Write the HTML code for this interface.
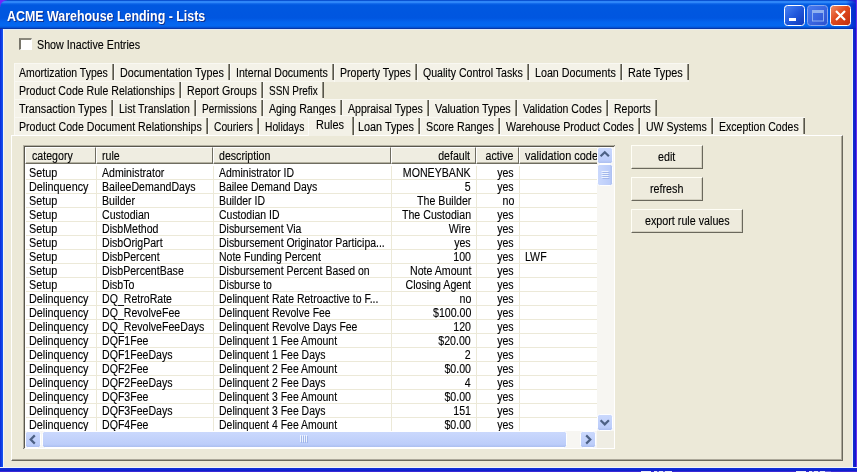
<!DOCTYPE html>
<html><head><meta charset="utf-8"><title>ACME Warehouse Lending - Lists</title>
<style>
html,body{margin:0;padding:0;}
body{width:857px;height:472px;overflow:hidden;position:relative;background:#ece9d8;font-family:"Liberation Sans",sans-serif;font-size:12px;color:#000;}
.abs{position:absolute;}
.t{display:inline-block;transform:scaleX(0.894);transform-origin:0 0;white-space:nowrap;filter:grayscale(1);-webkit-text-stroke:0.12px #000;}
.r .t{transform-origin:100% 0;}
.m .t{transform-origin:50% 0;}
#title{left:0;top:0;width:857px;height:29px;background:linear-gradient(to bottom,#0a52d2 0px,#0a52d2 0.8px,#2e86f8 1.3px,#2e86f8 2.6px,#1068ea 3.6px,#0058e0 5px,#0056e0 18px,#0464ee 22px,#0468f0 26px,#0452d4 27.5px,#0838a8 28px,#0838a8 29px);}
#topl{left:3px;top:29px;width:850px;height:1px;background:#e2eaf4;}
#title span{position:absolute;left:7px;top:8px;line-height:17px;color:#fff;font-weight:bold;font-size:14px;white-space:nowrap;text-shadow:1px 1px 0 #10308c;transform:scaleX(.887);transform-origin:0 0;}
#bl{left:0;top:29px;width:4px;height:443px;background:linear-gradient(to right,#0a28d8 0,#1048ea 2px,#1a58f0 3px,#f2f5f8 3px,#f2f5f8 4px);}
#br{left:852px;top:29px;width:5px;height:443px;background:linear-gradient(to right,#eef3f8 0,#eef3f8 1px,#1030d0 1px,#1414c8 4px,#6a30f0 4px);}
#bb{left:0;top:467px;width:857px;height:5px;background:linear-gradient(to bottom,#eef3f8 0,#eef3f8 1px,#1030dc 1px,#0c18c0 5px);}
.tab{position:absolute;height:19px;line-height:19px;border-top:1px solid #f9f8f2;white-space:nowrap;background:#f4f2e8;box-sizing:border-box;padding-left:4px;border-left:1px solid #faf9f4;}
.tab:after{content:"";position:absolute;right:0;top:0px;width:1px;height:16px;background:#57554b;border-left:1px solid #939183;}
.tab.sel{z-index:2;background:#f3f1e7;height:21px;padding-left:7px;border-left:1px solid #fcfbf8;}
.tab.sel:after{top:1px;height:18px;}
#panel{z-index:1;left:11px;top:135px;width:832px;height:326px;box-sizing:border-box;border-left:1px solid #fff;border-top:1px solid #fff;border-right:1px solid #6a685c;border-bottom:1px solid #6a685c;box-shadow:inset -1px -1px 0 #aca899;}
#lv{z-index:3;left:23px;top:145px;width:592px;height:304px;background:#fff;box-sizing:border-box;border-left:2px solid #5a584e;border-top:2px solid #5a584e;border-right:1px solid #fff;border-bottom:1px solid #fff;overflow:hidden;}
#lvo{z-index:4;left:23px;top:145px;width:591px;height:303px;box-sizing:border-box;border-left:1px solid #b4b1a2;border-top:1px solid #b4b1a2;}
.hc{position:absolute;top:0;height:17px;line-height:17px;background:#efede1;box-sizing:border-box;border-left:1px solid #fff;border-top:1px solid #fff;border-right:1px solid #6e6c60;border-bottom:1px solid #6e6c60;box-shadow:inset 0 -1px 0 #b5b2a2;white-space:nowrap;overflow:hidden;}
.row{position:absolute;left:0;width:572px;height:14px;line-height:15px;border-bottom:1px solid #ece9d8;box-sizing:border-box;}
.c{position:absolute;top:0;height:14px;white-space:nowrap;overflow:hidden;box-sizing:border-box;border-left:1px solid #ece9d8;}
.btn{z-index:3;position:absolute;height:24px;line-height:22px;text-align:center;box-sizing:border-box;background:#eeebdd;border-left:1px solid #fffef6;border-top:1px solid #fffef6;border-right:1px solid #6a685c;border-bottom:1px solid #6a685c;box-shadow:inset -1px -1px 0 #d3d0c0;}
</style></head><body>

<div class="abs" id="title"><span>ACME Warehouse Lending - Lists</span></div>
<div class="abs" id="topl"></div>
<div class="abs" style="left:0;top:0;width:7px;height:7px;background:radial-gradient(circle at 100% 100%,rgba(112,40,248,0) 6.2px,#7028f8 7.2px);"></div>
<div class="abs" style="left:850px;top:0;width:7px;height:7px;background:radial-gradient(circle at 0 100%,rgba(112,40,248,0) 6.2px,#7028f8 7.2px);"></div>
<div class="abs" style="left:846px;top:0;width:11px;height:29px;background:linear-gradient(to right,rgba(8,30,200,0),rgba(8,30,200,.75) 8px,rgba(8,30,200,.75) 10px,#6a30f0 10px);"></div>
<div class="abs" id="bl"></div><div class="abs" id="br"></div><div class="abs" id="bb"></div>
<svg class="abs" style="left:780px;top:3px" width="76" height="24" viewBox="0 0 76 24">
<defs>
<linearGradient id="gb" x1="0" y1="0" x2="1" y2="1"><stop offset="0" stop-color="#4a84f4"/><stop offset="0.5" stop-color="#2058dc"/><stop offset="1" stop-color="#1238b8"/></linearGradient>
<linearGradient id="gd" x1="0" y1="0" x2="1" y2="1"><stop offset="0" stop-color="#4a7cf0"/><stop offset="1" stop-color="#2a50d0"/></linearGradient>
<linearGradient id="gr" x1="0" y1="0" x2="1" y2="1"><stop offset="0" stop-color="#f0906a"/><stop offset="0.45" stop-color="#e04a1e"/><stop offset="1" stop-color="#c02c0c"/></linearGradient>
</defs>
<rect x="4.5" y="2.5" width="20" height="20" rx="3" fill="url(#gb)" stroke="#fff" stroke-width="1"/>
<rect x="9" y="15" width="7" height="3" fill="#fff"/>
<rect x="27.5" y="2.5" width="20" height="20" rx="3" fill="url(#gd)" stroke="#86a6ee" stroke-width="1"/>
<rect x="32.5" y="8" width="11" height="10" fill="none" stroke="#8fb0f0" stroke-width="1"/><rect x="32" y="7" width="12" height="3" fill="#8fb0f0"/>
<rect x="50.5" y="2.5" width="20" height="20" rx="3" fill="url(#gr)" stroke="#fff" stroke-width="1"/>
<path d="M56 8 L65 17 M65 8 L56 17" stroke="#fff" stroke-width="2.2" fill="none"/>
</svg>
<div class="abs" style="left:19px;top:38px;width:13px;height:12px;box-sizing:border-box;background:#fff;border-left:2px solid #77756a;border-top:2px solid #8a887c;border-right:1px solid #fff;border-bottom:1px solid #fff;"></div>
<div class="abs" style="left:37px;top:38px;line-height:15px;white-space:nowrap;"><span class="t">Show Inactive Entries</span></div>
<div class="abs" id="panel"></div>
<div class="tab" style="left:14px;top:63px;width:100px;padding-left:4px;"><span class="t" style="transform:scaleX(0.872)">Amortization Types</span></div>
<div class="tab" style="left:114px;top:63px;width:116px;padding-left:5px;"><span class="t" style="transform:scaleX(0.896)">Documentation Types</span></div>
<div class="tab" style="left:230px;top:63px;width:104px;padding-left:5px;"><span class="t" style="transform:scaleX(0.882)">Internal Documents</span></div>
<div class="tab" style="left:334px;top:63px;width:83px;padding-left:5px;"><span class="t" style="transform:scaleX(0.880)">Property Types</span></div>
<div class="tab" style="left:417px;top:63px;width:112px;padding-left:5px;"><span class="t" style="transform:scaleX(0.882)">Quality Control Tasks</span></div>
<div class="tab" style="left:529px;top:63px;width:93px;padding-left:5px;"><span class="t" style="transform:scaleX(0.891)">Loan Documents</span></div>
<div class="tab" style="left:622px;top:63px;width:67px;padding-left:5px;"><span class="t" style="transform:scaleX(0.906)">Rate Types</span></div>
<div class="tab" style="left:14px;top:81px;width:167px;padding-left:4px;"><span class="t" style="transform:scaleX(0.881)">Product Code Rule Relationships</span></div>
<div class="tab" style="left:181px;top:81px;width:82px;padding-left:5px;"><span class="t" style="transform:scaleX(0.887)">Report Groups</span></div>
<div class="tab" style="left:263px;top:81px;width:61px;padding-left:5px;"><span class="t" style="transform:scaleX(0.832)">SSN Prefix</span></div>
<div class="tab" style="left:14px;top:99px;width:99px;padding-left:4px;"><span class="t" style="transform:scaleX(0.902)">Transaction Types</span></div>
<div class="tab" style="left:113px;top:99px;width:83px;padding-left:5px;"><span class="t" style="transform:scaleX(0.877)">List Translation</span></div>
<div class="tab" style="left:196px;top:99px;width:67px;padding-left:5px;"><span class="t" style="transform:scaleX(0.838)">Permissions</span></div>
<div class="tab" style="left:263px;top:99px;width:79px;padding-left:5px;"><span class="t" style="transform:scaleX(0.886)">Aging Ranges</span></div>
<div class="tab" style="left:342px;top:99px;width:87px;padding-left:5px;"><span class="t" style="transform:scaleX(0.878)">Appraisal Types</span></div>
<div class="tab" style="left:429px;top:99px;width:88px;padding-left:5px;"><span class="t" style="transform:scaleX(0.899)">Valuation Types</span></div>
<div class="tab" style="left:517px;top:99px;width:91px;padding-left:5px;"><span class="t" style="transform:scaleX(0.877)">Validation Codes</span></div>
<div class="tab" style="left:608px;top:99px;width:49px;padding-left:5px;"><span class="t" style="transform:scaleX(0.876)">Reports</span></div>
<div class="tab" style="left:14px;top:117px;width:194px;padding-left:4px;"><span class="t" style="transform:scaleX(0.884)">Product Code Document Relationships</span></div>
<div class="tab" style="left:208px;top:117px;width:51px;padding-left:5px;"><span class="t" style="transform:scaleX(0.855)">Couriers</span></div>
<div class="tab" style="left:259px;top:117px;width:52px;padding-left:5px;"><span class="t" style="transform:scaleX(0.854)">Holidays</span></div>
<div class="tab sel" style="left:308px;top:115px;width:46px;"><span class="t" style="transform:scaleX(0.912)">Rules</span></div>
<div class="tab" style="left:354px;top:117px;width:66px;padding-left:3px;"><span class="t" style="transform:scaleX(0.903)">Loan Types</span></div>
<div class="tab" style="left:420px;top:117px;width:80px;padding-left:5px;"><span class="t" style="transform:scaleX(0.892)">Score Ranges</span></div>
<div class="tab" style="left:500px;top:117px;width:140px;padding-left:5px;"><span class="t" style="transform:scaleX(0.890)">Warehouse Product Codes</span></div>
<div class="tab" style="left:640px;top:117px;width:73px;padding-left:5px;"><span class="t" style="transform:scaleX(0.877)">UW Systems</span></div>
<div class="tab" style="left:713px;top:117px;width:92px;padding-left:5px;"><span class="t" style="transform:scaleX(0.879)">Exception Codes</span></div>
<div class="abs" id="lv">
<div class="hc" style="left:0px;width:71px;padding-left:6px;"><span class="t" style="transform:scaleX(0.885)">category</span></div>
<div class="hc" style="left:71px;width:117px;padding-left:5px;"><span class="t" style="transform:scaleX(0.885)">rule</span></div>
<div class="hc" style="left:188px;width:178px;padding-left:5px;"><span class="t" style="transform:scaleX(0.885)">description</span></div>
<div class="hc r" style="left:366px;width:85px;text-align:right;padding-right:5px;"><span class="t" style="transform:scaleX(0.885)">default</span></div>
<div class="hc r" style="left:451px;width:43px;text-align:right;padding-right:5px;"><span class="t" style="transform:scaleX(0.885)">active</span></div>
<div class="hc" style="left:494px;width:100px;padding-left:5px;"><span class="t" style="transform:scaleX(0.912)">validation code</span></div>
<div class="row" style="top:19px;">
<div class="c" style="left:0px;width:71px;padding-left:3px;border-left:1px solid #fff;"><span class="t" style="transform:scaleX(0.900)">Setup</span></div>
<div class="c" style="left:71px;width:117px;padding-left:5px;"><span class="t" style="transform:scaleX(0.882)">Administrator</span></div>
<div class="c" style="left:188px;width:178px;padding-left:5px;"><span class="t" style="transform:scaleX(0.872)">Administrator ID</span></div>
<div class="c r" style="left:366px;width:85px;text-align:right;padding-right:5px;"><span class="t" style="transform:scaleX(0.885)">MONEYBANK</span></div>
<div class="c r" style="left:451px;width:43px;text-align:right;padding-right:5px;"><span class="t" style="transform:scaleX(0.885)">yes</span></div>
<div class="c" style="left:494px;width:79px;padding-left:5px;"></div>
</div>
<div class="row" style="top:33px;">
<div class="c" style="left:0px;width:71px;padding-left:3px;border-left:1px solid #fff;"><span class="t" style="transform:scaleX(0.900)">Delinquency</span></div>
<div class="c" style="left:71px;width:117px;padding-left:5px;"><span class="t" style="transform:scaleX(0.882)">BaileeDemandDays</span></div>
<div class="c" style="left:188px;width:178px;padding-left:5px;"><span class="t" style="transform:scaleX(0.872)">Bailee Demand Days</span></div>
<div class="c r" style="left:366px;width:85px;text-align:right;padding-right:5px;"><span class="t" style="transform:scaleX(0.885)">5</span></div>
<div class="c r" style="left:451px;width:43px;text-align:right;padding-right:5px;"><span class="t" style="transform:scaleX(0.885)">yes</span></div>
<div class="c" style="left:494px;width:79px;padding-left:5px;"></div>
</div>
<div class="row" style="top:47px;">
<div class="c" style="left:0px;width:71px;padding-left:3px;border-left:1px solid #fff;"><span class="t" style="transform:scaleX(0.900)">Setup</span></div>
<div class="c" style="left:71px;width:117px;padding-left:5px;"><span class="t" style="transform:scaleX(0.882)">Builder</span></div>
<div class="c" style="left:188px;width:178px;padding-left:5px;"><span class="t" style="transform:scaleX(0.872)">Builder ID</span></div>
<div class="c r" style="left:366px;width:85px;text-align:right;padding-right:5px;"><span class="t" style="transform:scaleX(0.885)">The Builder</span></div>
<div class="c r" style="left:451px;width:43px;text-align:right;padding-right:5px;"><span class="t" style="transform:scaleX(0.885)">no</span></div>
<div class="c" style="left:494px;width:79px;padding-left:5px;"></div>
</div>
<div class="row" style="top:61px;">
<div class="c" style="left:0px;width:71px;padding-left:3px;border-left:1px solid #fff;"><span class="t" style="transform:scaleX(0.900)">Setup</span></div>
<div class="c" style="left:71px;width:117px;padding-left:5px;"><span class="t" style="transform:scaleX(0.882)">Custodian</span></div>
<div class="c" style="left:188px;width:178px;padding-left:5px;"><span class="t" style="transform:scaleX(0.872)">Custodian ID</span></div>
<div class="c r" style="left:366px;width:85px;text-align:right;padding-right:5px;"><span class="t" style="transform:scaleX(0.885)">The Custodian</span></div>
<div class="c r" style="left:451px;width:43px;text-align:right;padding-right:5px;"><span class="t" style="transform:scaleX(0.885)">yes</span></div>
<div class="c" style="left:494px;width:79px;padding-left:5px;"></div>
</div>
<div class="row" style="top:75px;">
<div class="c" style="left:0px;width:71px;padding-left:3px;border-left:1px solid #fff;"><span class="t" style="transform:scaleX(0.900)">Setup</span></div>
<div class="c" style="left:71px;width:117px;padding-left:5px;"><span class="t" style="transform:scaleX(0.882)">DisbMethod</span></div>
<div class="c" style="left:188px;width:178px;padding-left:5px;"><span class="t" style="transform:scaleX(0.872)">Disbursement Via</span></div>
<div class="c r" style="left:366px;width:85px;text-align:right;padding-right:5px;"><span class="t" style="transform:scaleX(0.885)">Wire</span></div>
<div class="c r" style="left:451px;width:43px;text-align:right;padding-right:5px;"><span class="t" style="transform:scaleX(0.885)">yes</span></div>
<div class="c" style="left:494px;width:79px;padding-left:5px;"></div>
</div>
<div class="row" style="top:89px;">
<div class="c" style="left:0px;width:71px;padding-left:3px;border-left:1px solid #fff;"><span class="t" style="transform:scaleX(0.900)">Setup</span></div>
<div class="c" style="left:71px;width:117px;padding-left:5px;"><span class="t" style="transform:scaleX(0.882)">DisbOrigPart</span></div>
<div class="c" style="left:188px;width:178px;padding-left:5px;"><span class="t" style="transform:scaleX(0.872)">Disbursement Originator Participa...</span></div>
<div class="c r" style="left:366px;width:85px;text-align:right;padding-right:5px;"><span class="t" style="transform:scaleX(0.885)">yes</span></div>
<div class="c r" style="left:451px;width:43px;text-align:right;padding-right:5px;"><span class="t" style="transform:scaleX(0.885)">yes</span></div>
<div class="c" style="left:494px;width:79px;padding-left:5px;"></div>
</div>
<div class="row" style="top:103px;">
<div class="c" style="left:0px;width:71px;padding-left:3px;border-left:1px solid #fff;"><span class="t" style="transform:scaleX(0.900)">Setup</span></div>
<div class="c" style="left:71px;width:117px;padding-left:5px;"><span class="t" style="transform:scaleX(0.882)">DisbPercent</span></div>
<div class="c" style="left:188px;width:178px;padding-left:5px;"><span class="t" style="transform:scaleX(0.872)">Note Funding Percent</span></div>
<div class="c r" style="left:366px;width:85px;text-align:right;padding-right:5px;"><span class="t" style="transform:scaleX(0.885)">100</span></div>
<div class="c r" style="left:451px;width:43px;text-align:right;padding-right:5px;"><span class="t" style="transform:scaleX(0.885)">yes</span></div>
<div class="c" style="left:494px;width:79px;padding-left:5px;"><span class="t" style="transform:scaleX(0.885)">LWF</span></div>
</div>
<div class="row" style="top:117px;">
<div class="c" style="left:0px;width:71px;padding-left:3px;border-left:1px solid #fff;"><span class="t" style="transform:scaleX(0.900)">Setup</span></div>
<div class="c" style="left:71px;width:117px;padding-left:5px;"><span class="t" style="transform:scaleX(0.882)">DisbPercentBase</span></div>
<div class="c" style="left:188px;width:178px;padding-left:5px;"><span class="t" style="transform:scaleX(0.872)">Disbursement Percent Based on</span></div>
<div class="c r" style="left:366px;width:85px;text-align:right;padding-right:5px;"><span class="t" style="transform:scaleX(0.885)">Note Amount</span></div>
<div class="c r" style="left:451px;width:43px;text-align:right;padding-right:5px;"><span class="t" style="transform:scaleX(0.885)">yes</span></div>
<div class="c" style="left:494px;width:79px;padding-left:5px;"></div>
</div>
<div class="row" style="top:131px;">
<div class="c" style="left:0px;width:71px;padding-left:3px;border-left:1px solid #fff;"><span class="t" style="transform:scaleX(0.900)">Setup</span></div>
<div class="c" style="left:71px;width:117px;padding-left:5px;"><span class="t" style="transform:scaleX(0.882)">DisbTo</span></div>
<div class="c" style="left:188px;width:178px;padding-left:5px;"><span class="t" style="transform:scaleX(0.872)">Disburse to</span></div>
<div class="c r" style="left:366px;width:85px;text-align:right;padding-right:5px;"><span class="t" style="transform:scaleX(0.885)">Closing Agent</span></div>
<div class="c r" style="left:451px;width:43px;text-align:right;padding-right:5px;"><span class="t" style="transform:scaleX(0.885)">yes</span></div>
<div class="c" style="left:494px;width:79px;padding-left:5px;"></div>
</div>
<div class="row" style="top:145px;">
<div class="c" style="left:0px;width:71px;padding-left:3px;border-left:1px solid #fff;"><span class="t" style="transform:scaleX(0.900)">Delinquency</span></div>
<div class="c" style="left:71px;width:117px;padding-left:5px;"><span class="t" style="transform:scaleX(0.882)">DQ_RetroRate</span></div>
<div class="c" style="left:188px;width:178px;padding-left:5px;"><span class="t" style="transform:scaleX(0.872)">Delinquent Rate Retroactive to F...</span></div>
<div class="c r" style="left:366px;width:85px;text-align:right;padding-right:5px;"><span class="t" style="transform:scaleX(0.885)">no</span></div>
<div class="c r" style="left:451px;width:43px;text-align:right;padding-right:5px;"><span class="t" style="transform:scaleX(0.885)">yes</span></div>
<div class="c" style="left:494px;width:79px;padding-left:5px;"></div>
</div>
<div class="row" style="top:159px;">
<div class="c" style="left:0px;width:71px;padding-left:3px;border-left:1px solid #fff;"><span class="t" style="transform:scaleX(0.900)">Delinquency</span></div>
<div class="c" style="left:71px;width:117px;padding-left:5px;"><span class="t" style="transform:scaleX(0.882)">DQ_RevolveFee</span></div>
<div class="c" style="left:188px;width:178px;padding-left:5px;"><span class="t" style="transform:scaleX(0.872)">Delinquent Revolve Fee</span></div>
<div class="c r" style="left:366px;width:85px;text-align:right;padding-right:5px;"><span class="t" style="transform:scaleX(0.885)">$100.00</span></div>
<div class="c r" style="left:451px;width:43px;text-align:right;padding-right:5px;"><span class="t" style="transform:scaleX(0.885)">yes</span></div>
<div class="c" style="left:494px;width:79px;padding-left:5px;"></div>
</div>
<div class="row" style="top:173px;">
<div class="c" style="left:0px;width:71px;padding-left:3px;border-left:1px solid #fff;"><span class="t" style="transform:scaleX(0.900)">Delinquency</span></div>
<div class="c" style="left:71px;width:117px;padding-left:5px;"><span class="t" style="transform:scaleX(0.882)">DQ_RevolveFeeDays</span></div>
<div class="c" style="left:188px;width:178px;padding-left:5px;"><span class="t" style="transform:scaleX(0.872)">Delinquent Revolve Days Fee</span></div>
<div class="c r" style="left:366px;width:85px;text-align:right;padding-right:5px;"><span class="t" style="transform:scaleX(0.885)">120</span></div>
<div class="c r" style="left:451px;width:43px;text-align:right;padding-right:5px;"><span class="t" style="transform:scaleX(0.885)">yes</span></div>
<div class="c" style="left:494px;width:79px;padding-left:5px;"></div>
</div>
<div class="row" style="top:187px;">
<div class="c" style="left:0px;width:71px;padding-left:3px;border-left:1px solid #fff;"><span class="t" style="transform:scaleX(0.900)">Delinquency</span></div>
<div class="c" style="left:71px;width:117px;padding-left:5px;"><span class="t" style="transform:scaleX(0.882)">DQF1Fee</span></div>
<div class="c" style="left:188px;width:178px;padding-left:5px;"><span class="t" style="transform:scaleX(0.872)">Delinquent 1 Fee Amount</span></div>
<div class="c r" style="left:366px;width:85px;text-align:right;padding-right:5px;"><span class="t" style="transform:scaleX(0.885)">$20.00</span></div>
<div class="c r" style="left:451px;width:43px;text-align:right;padding-right:5px;"><span class="t" style="transform:scaleX(0.885)">yes</span></div>
<div class="c" style="left:494px;width:79px;padding-left:5px;"></div>
</div>
<div class="row" style="top:201px;">
<div class="c" style="left:0px;width:71px;padding-left:3px;border-left:1px solid #fff;"><span class="t" style="transform:scaleX(0.900)">Delinquency</span></div>
<div class="c" style="left:71px;width:117px;padding-left:5px;"><span class="t" style="transform:scaleX(0.882)">DQF1FeeDays</span></div>
<div class="c" style="left:188px;width:178px;padding-left:5px;"><span class="t" style="transform:scaleX(0.872)">Delinquent 1 Fee Days</span></div>
<div class="c r" style="left:366px;width:85px;text-align:right;padding-right:5px;"><span class="t" style="transform:scaleX(0.885)">2</span></div>
<div class="c r" style="left:451px;width:43px;text-align:right;padding-right:5px;"><span class="t" style="transform:scaleX(0.885)">yes</span></div>
<div class="c" style="left:494px;width:79px;padding-left:5px;"></div>
</div>
<div class="row" style="top:215px;">
<div class="c" style="left:0px;width:71px;padding-left:3px;border-left:1px solid #fff;"><span class="t" style="transform:scaleX(0.900)">Delinquency</span></div>
<div class="c" style="left:71px;width:117px;padding-left:5px;"><span class="t" style="transform:scaleX(0.882)">DQF2Fee</span></div>
<div class="c" style="left:188px;width:178px;padding-left:5px;"><span class="t" style="transform:scaleX(0.872)">Delinquent 2 Fee Amount</span></div>
<div class="c r" style="left:366px;width:85px;text-align:right;padding-right:5px;"><span class="t" style="transform:scaleX(0.885)">$0.00</span></div>
<div class="c r" style="left:451px;width:43px;text-align:right;padding-right:5px;"><span class="t" style="transform:scaleX(0.885)">yes</span></div>
<div class="c" style="left:494px;width:79px;padding-left:5px;"></div>
</div>
<div class="row" style="top:229px;">
<div class="c" style="left:0px;width:71px;padding-left:3px;border-left:1px solid #fff;"><span class="t" style="transform:scaleX(0.900)">Delinquency</span></div>
<div class="c" style="left:71px;width:117px;padding-left:5px;"><span class="t" style="transform:scaleX(0.882)">DQF2FeeDays</span></div>
<div class="c" style="left:188px;width:178px;padding-left:5px;"><span class="t" style="transform:scaleX(0.872)">Delinquent 2 Fee Days</span></div>
<div class="c r" style="left:366px;width:85px;text-align:right;padding-right:5px;"><span class="t" style="transform:scaleX(0.885)">4</span></div>
<div class="c r" style="left:451px;width:43px;text-align:right;padding-right:5px;"><span class="t" style="transform:scaleX(0.885)">yes</span></div>
<div class="c" style="left:494px;width:79px;padding-left:5px;"></div>
</div>
<div class="row" style="top:243px;">
<div class="c" style="left:0px;width:71px;padding-left:3px;border-left:1px solid #fff;"><span class="t" style="transform:scaleX(0.900)">Delinquency</span></div>
<div class="c" style="left:71px;width:117px;padding-left:5px;"><span class="t" style="transform:scaleX(0.882)">DQF3Fee</span></div>
<div class="c" style="left:188px;width:178px;padding-left:5px;"><span class="t" style="transform:scaleX(0.872)">Delinquent 3 Fee Amount</span></div>
<div class="c r" style="left:366px;width:85px;text-align:right;padding-right:5px;"><span class="t" style="transform:scaleX(0.885)">$0.00</span></div>
<div class="c r" style="left:451px;width:43px;text-align:right;padding-right:5px;"><span class="t" style="transform:scaleX(0.885)">yes</span></div>
<div class="c" style="left:494px;width:79px;padding-left:5px;"></div>
</div>
<div class="row" style="top:257px;">
<div class="c" style="left:0px;width:71px;padding-left:3px;border-left:1px solid #fff;"><span class="t" style="transform:scaleX(0.900)">Delinquency</span></div>
<div class="c" style="left:71px;width:117px;padding-left:5px;"><span class="t" style="transform:scaleX(0.882)">DQF3FeeDays</span></div>
<div class="c" style="left:188px;width:178px;padding-left:5px;"><span class="t" style="transform:scaleX(0.872)">Delinquent 3 Fee Days</span></div>
<div class="c r" style="left:366px;width:85px;text-align:right;padding-right:5px;"><span class="t" style="transform:scaleX(0.885)">151</span></div>
<div class="c r" style="left:451px;width:43px;text-align:right;padding-right:5px;"><span class="t" style="transform:scaleX(0.885)">yes</span></div>
<div class="c" style="left:494px;width:79px;padding-left:5px;"></div>
</div>
<div class="row" style="top:271px;">
<div class="c" style="left:0px;width:71px;padding-left:3px;border-left:1px solid #fff;"><span class="t" style="transform:scaleX(0.900)">Delinquency</span></div>
<div class="c" style="left:71px;width:117px;padding-left:5px;"><span class="t" style="transform:scaleX(0.882)">DQF4Fee</span></div>
<div class="c" style="left:188px;width:178px;padding-left:5px;"><span class="t" style="transform:scaleX(0.872)">Delinquent 4 Fee Amount</span></div>
<div class="c r" style="left:366px;width:85px;text-align:right;padding-right:5px;"><span class="t" style="transform:scaleX(0.885)">$0.00</span></div>
<div class="c r" style="left:451px;width:43px;text-align:right;padding-right:5px;"><span class="t" style="transform:scaleX(0.885)">yes</span></div>
<div class="c" style="left:494px;width:79px;padding-left:5px;"></div>
</div>
<svg class="abs" style="left:572px;top:0" width="17" height="284" viewBox="0 0 17 284">
<defs><linearGradient id="sv" x1="0" y1="0" x2="1" y2="0"><stop offset="0" stop-color="#cbd9fd"/><stop offset="0.8" stop-color="#bccdfa"/><stop offset="1" stop-color="#a9bcee"/></linearGradient>
<linearGradient id="sh" x1="0" y1="0" x2="0" y2="1"><stop offset="0" stop-color="#cbd9fd"/><stop offset="0.8" stop-color="#bccdfa"/><stop offset="1" stop-color="#a9bcee"/></linearGradient></defs>
<rect x="0" y="0" width="17" height="284" fill="#f7f6f2"/>
<rect x="0.5" y="0.5" width="15" height="16" rx="2" fill="url(#sh)" stroke="#fff"/>
<path d="M3.6 9.3 L7.75 5.2 L11.9 9.3" stroke="#4d6185" stroke-width="2.2" fill="none"/>
<rect x="0.5" y="17.5" width="15" height="21" rx="2" fill="url(#sv)" stroke="#fff"/>
<path d="M4.5 24.5h7M4.5 26.5h7M4.5 28.5h7M4.5 30.5h7" stroke="#eef4fe" stroke-width="1"/>
<path d="M5.5 25.5h7M5.5 27.5h7M5.5 29.5h7M5.5 31.5h7" stroke="#8ea6e2" stroke-width="1" opacity=".6"/>
<rect x="0.5" y="267.5" width="15" height="16" rx="2" fill="url(#sh)" stroke="#fff"/>
<path d="M3.6 273.3 L7.75 277.4 L11.9 273.3" stroke="#4d6185" stroke-width="2.2" fill="none"/>
</svg>
<svg class="abs" style="left:0;top:284px" width="589" height="17" viewBox="0 0 589 17">
<rect x="0" y="0" width="572" height="17" fill="#f7f6f2"/>
<rect x="572" y="0" width="17" height="17" fill="#efede3"/>
<rect x="0.5" y="0.5" width="15" height="16" rx="2" fill="url(#sh)" stroke="#fff"/>
<path d="M9.8 4.4 L5.7 8.5 L9.8 12.6" stroke="#4d6185" stroke-width="2.2" fill="none"/>
<rect x="17.5" y="0.5" width="524" height="16" rx="2" fill="url(#sh)" stroke="#fff"/>
<path d="M275.5 4v7M277.5 4v7M279.5 4v7M281.5 4v7" stroke="#eef4fe" stroke-width="1"/>
<path d="M276.5 5v7M278.5 5v7M280.5 5v7M282.5 5v7" stroke="#8ea6e2" stroke-width="1" opacity=".6"/>
<rect x="555.5" y="0.5" width="15" height="16" rx="2" fill="url(#sh)" stroke="#fff"/>
<path d="M6.2 4.4 L10.3 8.5 L6.2 12.6" transform="translate(555,0)" stroke="#4d6185" stroke-width="2.2" fill="none"/>
</svg>
</div>
<div class="abs" id="lvo"></div>
<div class="btn m" style="left:631px;top:145px;width:72px;"><span class="t">edit</span></div>
<div class="btn m" style="left:631px;top:177px;width:72px;"><span class="t">refresh</span></div>
<div class="btn m" style="left:631px;top:209px;width:112px;"><span class="t">export rule values</span></div>
<div class="abs" style="left:0;top:471px;width:857px;height:1px;background:#3a28d8;"></div>
<div class="abs" style="left:641px;top:471px;width:10px;height:1px;background:#e8e8f8;"></div><div class="abs" style="left:654px;top:471px;width:18px;height:1px;background:linear-gradient(to right,#e8e8f8 3px,#6a60e0 3px,#6a60e0 5px,#e8e8f8 5px,#e8e8f8 9px,#6a60e0 9px,#6a60e0 11px,#e8e8f8 11px);"></div>
<div class="abs" style="left:796px;top:471px;width:10px;height:1px;background:#e8e8f8;"></div><div class="abs" style="left:809px;top:471px;width:22px;height:1px;background:linear-gradient(to right,#e8e8f8 3px,#6a60e0 3px,#6a60e0 5px,#e8e8f8 5px,#e8e8f8 9px,#6a60e0 9px,#6a60e0 11px,#e8e8f8 11px,#e8e8f8 16px,#6a60e0 16px);"></div>
</body></html>
